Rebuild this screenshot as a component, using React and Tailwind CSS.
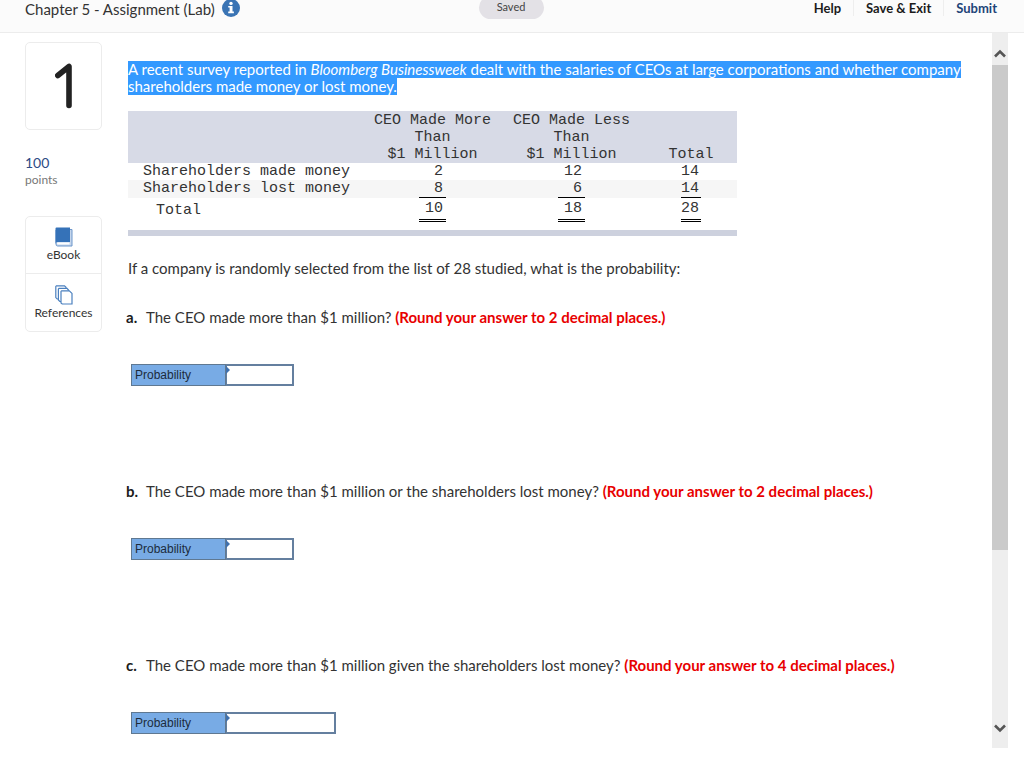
const rows = [
  { label: 'Shareholders made money', values: ['2', '12', '14'] },
  { label: 'Shareholders lost money', values: ['8', '6', '14'] },
]

const questions = [
  { id: 'a', text: 'The CEO made more than $1 million?', places: 2 },
  { id: 'b', text: 'The CEO made more than $1 million or the shareholders lost money?', places: 2 },
  { id: 'c', text: 'The CEO made more than $1 million given the shareholders lost money?', places: 4, wide: true },
]

function InfoIcon() {
  return (
    <svg viewBox="0 0 18 18" className="w-[18px] h-[18px]" aria-hidden="true">
      <circle cx="9" cy="9" r="9" fill="#3a74b4" />
      <circle cx="9" cy="4.4" r="1.7" fill="#fff" />
      <path d="M6.2 7H10.5V12.6H11.9V14.2H6.2V12.6H7.6V8.6H6.2Z" fill="#fff" />
    </svg>
  )
}

function BookIcon() {
  return (
    <svg viewBox="0 0 18 20" className="w-[18px] h-5" aria-hidden="true">
      <path d="M3 2.5H17V19H2.5Q1 19 1 17V3Z" fill="#c5d6ec" stroke="#6d97cb" strokeWidth="1" />
      <path d="M1.5 0.5H15V15H2.5Q0.5 15 0.5 17V1.5Q0.5 0.5 1.5 0.5Z" fill="#3572b8" />
      <path d="M2.5 15.5H14.5V17.5H2.5Q1.5 16.5 2.5 15.5Z" fill="#fff" />
    </svg>
  )
}

function ReferencesIcon() {
  return (
    <svg viewBox="0 0 18 20" className="w-[18px] h-5" fill="#fff" stroke="#4b80bf" strokeWidth="1.2" aria-hidden="true">
      <path d="M1.4 0.8H9.5L11 2.3V14H2.2L0.8 12.6V1.4Z" />
      <path d="M4 3.3H12L13.5 5V16.5H4.8L3.4 15V4Z" />
      <path d="M6.6 5.8H14.3L17 8.4V19H7.2L6 18V6.4Z" />
    </svg>
  )
}

function Chevron({ down }) {
  return (
    <svg viewBox="0 0 12 9" className="w-3 h-[9px]" fill="none" stroke="#555" strokeWidth="2.6" aria-hidden="true">
      <path d={down ? 'M1 1.5L6 6.5L11 1.5' : 'M1 7.5L6 2.5L11 7.5'} />
    </svg>
  )
}

function Header() {
  return (
    <header className="h-[33px] shrink-0 flex items-start justify-between pl-[25px] pr-[27px] bg-[#fbfbfb] border-b border-[#ececec]">
      <div className="flex-1 flex items-start gap-[7px]">
        <h1 className="text-[15px] leading-[18px] text-[#333]">Chapter 5 - Assignment (Lab)</h1>
        <button type="button" aria-label="Assignment info" className="-mt-px"><InfoIcon /></button>
      </div>
      <span className="-mt-1 w-[65px] h-[23px] rounded-full bg-[#e3e1e6] text-[11px] leading-[22px] text-center text-[#444]">Saved</span>
      <nav className="flex-1 flex justify-end text-[13px] leading-4 font-bold text-[#1c1c1c]">
        <button type="button" className="pr-3 border-r border-[#eee]">Help</button>
        <button type="button" className="px-3 border-r border-[#eee]">Save &amp; Exit</button>
        <button type="button" className="pl-3 text-[#1e4478]">Submit</button>
      </nav>
    </header>
  )
}

function Sidebar() {
  return (
    <aside className="w-[77px] shrink-0 pt-[9px]">
      <div className="h-[88px] flex items-center justify-center border border-[#ececec] rounded-[5px] bg-white">
        <svg viewBox="0 0 18 48" className="w-[18px] h-12" role="img" aria-label="Question 1">
          <path d="M2.8 13.5L14 4.5V43.5" fill="none" stroke="#222" strokeWidth="5.6" strokeLinecap="round" strokeLinejoin="round" />
        </svg>
      </div>
      <p className="mt-6 text-[14px] leading-[17px] text-[#2d4b85]">100</p>
      <p className="text-[12px] leading-[17px] text-[#777]">points</p>
      <div className="mt-7 border border-[#ececec] rounded-[5px] text-[12px] leading-[14px] text-[#333]">
        <button type="button" className="w-full h-[57px] pb-1 flex flex-col items-center justify-end gap-px border-b border-[#ececec]">
          <BookIcon />
          <span className="mb-[7px]">eBook</span>
        </button>
        <button type="button" className="w-full h-[57px] pb-1 flex flex-col items-center justify-end gap-px">
          <ReferencesIcon />
          <span className="mb-[7px]">References</span>
        </button>
      </div>
    </aside>
  )
}

function Figure({ value, narrow, className = '' }) {
  return (
    <span className={(narrow ? 'w-5 pr-[2px] ' : 'w-[27px] pr-[3px] ') + 'inline-block align-top text-right ' + className}>{value}</span>
  )
}

function SalaryTable() {
  return (
    <table className="w-[609px] table-fixed border-b-[6px] border-[#cdd1de] font-['Liberation_Mono',monospace] text-[15px] leading-[17px] text-[#333]">
      <colgroup>
        <col className="w-[235px]" />
        <col className="w-[139px]" />
        <col className="w-[139px]" />
        <col />
      </colgroup>
      <thead className="bg-[#d7dae6]">
        <tr className="align-bottom">
          <td></td>
          <th scope="col" className="pt-px font-normal">CEO Made More<br />Than<br />$1 Million</th>
          <th scope="col" className="pt-px font-normal">CEO Made Less<br />Than<br />$1 Million</th>
          <th scope="col" className="pl-1 font-normal">Total</th>
        </tr>
      </thead>
      <tbody>
        {rows.map((row, r) =>
          <tr key={row.label} className="even:bg-[#f6f6f6] align-top">
            <th scope="row" className="pl-[15px] text-left font-normal">{row.label}</th>
            {row.values.map((value, i) =>
              <td key={i} className="text-center last:pl-1">
                <Figure value={value} narrow={i === 2} className={r === 1 ? 'border-b border-black' : ''} />
              </td>
            )}
          </tr>
        )}
        <tr className="h-[35px] align-top">
          <th scope="row" className="pl-7 pt-1 text-left font-normal">Total</th>
          {['10', '18', '28'].map((value, i) =>
            <td key={value} className="pt-[2px] text-center last:pl-1">
              <Figure value={value} narrow={i === 2} className="pb-[2px] border-b-[3px] border-double border-black" />
            </td>
          )}
        </tr>
      </tbody>
    </table>
  )
}

function Question({ id, text, places, wide }) {
  return (
    <section className="h-[174px] shrink-0">
      <p className="flex leading-[18px]">
        <b className="w-5 shrink-0 text-[#1c1c1c]">{id}.</b>
        <span>{text} <b className="text-[#e80000]">(Round your answer to {places} decimal places.)</b></span>
      </p>
      <div className="mt-[38px] ml-[5px] h-[22px] flex font-['Liberation_Sans',sans-serif] text-[12px]">
        <label htmlFor={'probability-' + id} className="w-[95px] pl-[3px] leading-5 bg-[#78abe5] border border-[#5f7891] text-[#1c2b3c]">Probability</label>
        <div className="relative">
          <input id={'probability-' + id} type="text" className={(wide ? 'w-[110px]' : 'w-[68px]') + ' h-[22px] px-1 block bg-white border-2 border-l border-[#647f9f] focus:outline-none'} />
          <svg viewBox="0 0 4 8" className="absolute left-0 top-[2px] w-1 h-2" aria-hidden="true">
            <path d="M0 0L4 4L0 8Z" fill="#3f70ad" />
          </svg>
        </div>
      </div>
    </section>
  )
}

function ScrollRail() {
  return (
    <div className="w-4 shrink-0 flex flex-col bg-[#eee]">
      <button type="button" aria-label="Scroll up" className="h-8 pt-2 flex items-center justify-center"><Chevron /></button>
      <div className="flex-1">
        <div className="h-3/4 bg-[#cacaca]"></div>
      </div>
      <button type="button" aria-label="Scroll down" className="h-9 pb-1 flex items-center justify-center"><Chevron down /></button>
    </div>
  )
}

export default function App() {
  return (
    <div className="h-screen flex flex-col overflow-hidden bg-white pb-[15px] font-[Lato,sans-serif] text-[#333]">
      <Header />
      <div className="flex-1 min-h-0 flex pl-[25px] pr-4">
        <Sidebar />
        <main className="flex-1 min-w-0 pt-7 ml-6 flex flex-col overflow-hidden text-[15px]">
          <p className="pl-[2px] mb-4 leading-[17px] whitespace-nowrap text-white">
            <span className="block w-fit bg-[#3399ff]">
              A recent survey reported in <i>Bloomberg Businessweek</i> dealt with the salaries of CEOs at large corporations and whether company
            </span>
            <span className="block w-fit bg-[#3399ff]">shareholders made money or lost money.</span>
          </p>
          <div className="pl-[2px]">
            <SalaryTable />
          </div>
          <p className="pl-[2px] mt-[23px] mb-[31px] leading-[18px]">If a company is randomly selected from the list of 28 studied, what is the probability:</p>
          {questions.map(question => <Question key={question.id} {...question} />)}
        </main>
        <ScrollRail />
      </div>
    </div>
  )
}
